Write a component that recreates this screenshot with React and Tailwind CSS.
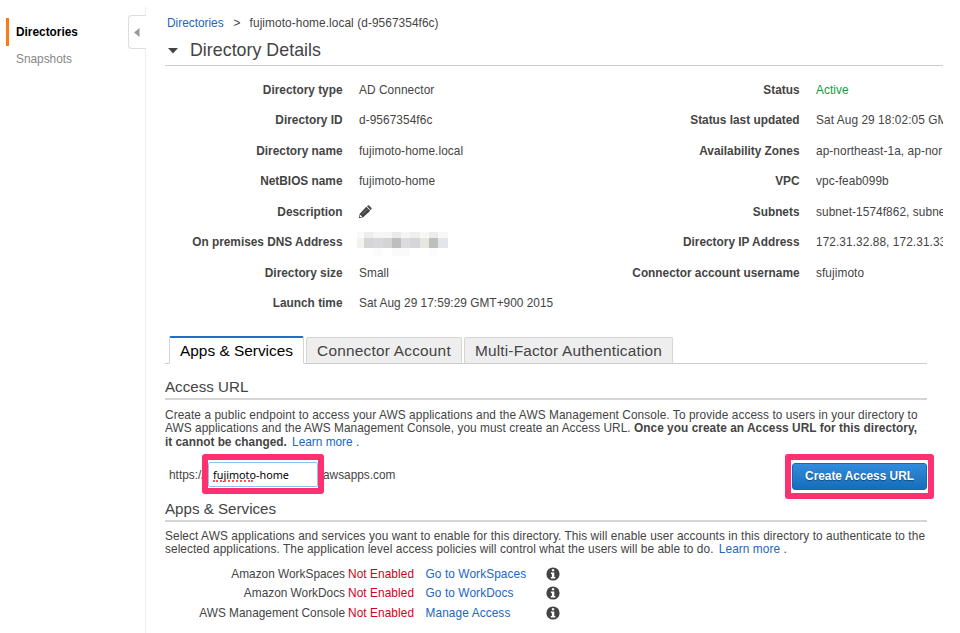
import { useState } from "react";

const details = [
  { label: "Directory type", value: "AD Connector" },
  { label: "Directory ID", value: "d-9567354f6c" },
  { label: "Directory name", value: "fujimoto-home.local" },
  { label: "NetBIOS name", value: "fujimoto-home" },
  { label: "Description", value: <PencilIcon /> },
  { label: "On premises DNS Address", value: <MaskedValue /> },
  { label: "Directory size", value: "Small" },
  {
    label: "Launch time",
    value: <span className="tracking-[0.03px]">Sat Aug 29 17:59:29 GMT+900 2015</span>,
  },
];

const statusDetails = [
  { label: "Status", value: <span className="text-[#179a3c]">Active</span> },
  { label: "Status last updated", value: "Sat Aug 29 18:02:05 GM" },
  { label: "Availability Zones", value: "ap-northeast-1a, ap-nor" },
  { label: "VPC", value: "vpc-feab099b" },
  { label: "Subnets", value: "subnet-1574f862, subne" },
  { label: "Directory IP Address", value: "172.31.32.88, 172.31.33" },
  { label: "Connector account username", value: "sfujimoto" },
];

const services = [
  { name: "Amazon WorkSpaces", action: "Go to WorkSpaces" },
  { name: "Amazon WorkDocs", action: "Go to WorkDocs" },
  { name: "AWS Management Console", action: "Manage Access" },
];

const tabs = [
  { name: "Apps & Services", width: "w-[135px]" },
  { name: "Connector Account", width: "w-[156px] tracking-[0.22px]" },
  { name: "Multi-Factor Authentication", width: "w-[209px] tracking-[0.18px]" },
];

function PencilIcon() {
  return (
    <svg width="14" height="14" viewBox="0 0 14 14" className="-ml-px">
      <path d="M.8 13.200l1-4.400L8.300 1.800l4 4L5.200 12.200z" fill="#444" />
      <path d="M9 1.300l.9-.8q.6-.5 1.200 0l2.400 2.400q.5.600 0 1.200l-.9.900z" fill="#444" />
      <path d="M2.300 9.800l2 2-1.700.5-.8-.8z" fill="#fff" />
      <path d="M4.300 9.200l5-5" stroke="#999" strokeWidth=".7" />
    </svg>
  );
}

function MaskedValue() {
  return (
    <div className="-ml-[2px] w-[91px] pt-[4px]">
      <div className="flex h-[6px]">
        <i className="w-[7px] bg-[#fafafa]" />
        <i className="w-[9px] bg-[#eeeeed]" />
        <i className="w-[19px] bg-[#f5f5f5]" />
        <i className="w-[9px] bg-[#eaeaea]" />
        <i className="w-[9px] bg-[#f5f5f5]" />
        <i className="w-[10px] bg-[#efeff0]" />
        <i className="w-[9px] bg-[#f7f7f5]" />
        <i className="w-[9px] bg-[#ececec]" />
        <i className="w-[10px] bg-[#f8f8f9]" />
      </div>
      <div className="flex h-[10px]">
        <i className="w-[7px] bg-[#f2f2f0]" />
        <i className="w-[9px] bg-[#d5d5d5]" />
        <i className="w-[10px] bg-[#d8d8da]" />
        <i className="w-[9px] bg-[#d4d4d4]" />
        <i className="w-[9px] bg-[#bebebe]" />
        <i className="w-[9px] bg-[#dcdcde]" />
        <i className="w-[10px] bg-[#d6d6d9]" />
        <i className="w-[9px] bg-[#e6e7e0]" />
        <i className="w-[9px] bg-[#bebebe]" />
        <i className="w-[10px] bg-[#e3e5e8]" />
      </div>
      <div className="flex h-[8px]">
        <i className="ml-[16px] w-[9px] bg-[#fbfbfb]" />
        <i className="ml-[10px] w-[18px] bg-[#fafafa]" />
        <i className="ml-[19px] w-[9px] bg-[#fcfcfc]" />
      </div>
    </div>
  );
}

function InfoIcon() {
  return (
    <svg width="14" height="14" viewBox="0 0 14 14">
      <circle cx="7" cy="7" r="6.600" fill="#444" />
      <path d="M5.900 2.300h2.300v2H5.900zM4.900 5.500h3.400v4.600h1v1.400H4.800v-1.400h1.100V6.900h-1z" fill="#fff" />
    </svg>
  );
}

function DetailRow({ label, value, labelWidth }) {
  return (
    <div className="flex h-[30.5px] items-center whitespace-nowrap">
      <div className={`${labelWidth} shrink-0 text-right font-bold`}>{label}</div>
      <div className="ml-[16.5px] tracking-[0.08px]">{value}</div>
    </div>
  );
}

function SectionTitle({ children }) {
  return (
    <h3 className="h-[24px] w-[762px] border-b-2 border-[#d5d5d5] text-[15.15px] leading-[22px] text-[#444]">
      {children}
    </h3>
  );
}

function App() {
  const [activeTab, setActiveTab] = useState("Apps & Services");
  const [url, setUrl] = useState("fujimoto-home");

  return (
    <div className="flex h-[633px] w-[960px] overflow-hidden bg-white font-['Liberation_Sans',Arial,sans-serif] text-[11.85px] leading-[14px] text-[#444]">
      {/* side menu */}
      <nav className="flex w-[128px] shrink-0 flex-col pt-[18px] pl-[6px]">
        <a className="flex h-[28px] items-center border-l-[3px] border-[#ff7a0e] pl-[7px] font-bold text-black">
          Directories
        </a>
        <a className="mt-[6px] pl-[10px] text-[#888]">Snapshots</a>
      </nav>
      <div className="mt-[7px] flex w-[18px] shrink-0 flex-col">
        <div className="h-[8px] border-r border-[#eee]" />
        <button className="flex h-[34px] items-center rounded-l-[4px] border border-r-0 border-[#ddd] pl-[5px]">
          <svg width="6" height="9" viewBox="0 0 6 9">
            <path d="M0 4.500L5.500 0v9z" fill="#999" />
          </svg>
        </button>
        <div className="flex-1 border-r border-[#eee]" />
      </div>

      <main className="ml-[19px] w-[778px] overflow-hidden pt-[16px]">
        <div className="flex pl-[2px] tracking-[0.08px]">
          <a className="tracking-normal text-[#2166c2]">Directories</a>
          <span className="ml-[10px]">&gt;</span>
          <span className="ml-[9px]">fujimoto-home.local (d-9567354f6c)</span>
        </div>
        <h2 className="mt-[6px] flex h-[30px] items-center border-b border-[#ccc] pb-px text-[17.8px] leading-[22px]">
          <svg width="10" height="6" viewBox="0 0 10 6" className="mt-[2px] ml-[3px]">
            <path d="M0 0h10L5 5.500z" fill="#444" />
          </svg>
          <span className="ml-[12px] tracking-[0.03px]">Directory Details</span>
        </h2>

        <div className="mt-[8.5px] flex h-[244px]">
          <div className="w-[450px] shrink-0">
            {details.map((item) => (
              <DetailRow key={item.label} {...item} labelWidth="w-[177.5px]" />
            ))}
          </div>
          <div>
            {statusDetails.map((item) => (
              <DetailRow key={item.label} {...item} labelWidth="w-[184.5px]" />
            ))}
          </div>
        </div>

        {/* tabs */}
        <div className="mt-[17.5px] flex h-[28px] w-[762px] items-end gap-[2px] border-b border-[#ccc] pl-[4px] text-[15.4px]">
          {tabs.map((tab) => (
            <button
              key={tab.name}
              onClick={() => setActiveTab(tab.name)}
              className={`${tab.width} shrink-0 whitespace-nowrap rounded-t-[2px] border border-[#d5d5d5] ${
                activeTab === tab.name
                  ? "-mb-px h-[28px] border-t-2 border-t-[#1f6fc9] border-b-white bg-white text-black"
                  : "h-[26px] border-b-0 bg-[#eee]"
              }`}
            >
              {tab.name}
            </button>
          ))}
        </div>

        <div className="mt-[12px]">
          <SectionTitle>Access URL</SectionTitle>
        </div>
        <div className="mt-[8.5px] leading-[13.6px] whitespace-nowrap">
          <p className="tracking-[0.082px]">
            Create a public endpoint to access your AWS applications and the AWS Management Console. To provide access to users in your directory to
          </p>
          <p className="tracking-[0.047px]">
            AWS applications and the AWS Management Console, you must create an Access URL. <b>Once you create an Access URL for this directory,</b>
          </p>
          <p>
            <b>it cannot be changed.</b> <a className="ml-[2px] text-[#2166c2]">Learn more</a> .
          </p>
        </div>

        <div className="mt-[3.5px] flex h-[45px]">
          <span className="mt-[15px] w-[37px] overflow-hidden pl-[4px]">https://</span>
          <div className="relative mt-[1px] h-[40px] w-[122px] shrink-0 rounded-[3px] border-[6px] border-[#ff3070] bg-white">
            <input
              value={url}
              onChange={(e) => setUrl(e.target.value)}
              className="mt-[2px] h-[25px] w-full rounded-[2px] border border-[#8cc6ee] pl-[4px] font-['Noto_Sans'] text-[10.8px] text-black outline-none"
            />
            {/* spelling mark */}
            <div className="absolute top-[20px] left-[5px] w-[40px] border-b-2 border-dotted border-[#f55]" />
          </div>
          <span className="mt-[15px] -ml-px">awsapps.com</span>
          <div className="mt-px ml-auto mr-[9px] h-[45px] w-[149px] shrink-0 rounded-[3px] border-[6px] border-[#ff3070] bg-white p-px">
            <button className="mt-[2px] h-[27px] w-full rounded-[3px] border border-[#1567b5] bg-linear-to-b from-[#328bdc] to-[#146eba] font-bold whitespace-nowrap text-white [text-shadow:0_1px_1px_#00000066]">
              Create Access URL
            </button>
          </div>
        </div>

        <SectionTitle>Apps &amp; Services</SectionTitle>
        <div className="mt-[8px] leading-[13.6px] whitespace-nowrap">
          <p className="tracking-[0.08px]">
            Select AWS applications and services you want to enable for this directory. This will enable user accounts in this directory to authenticate to the
          </p>
          <p className="tracking-[0.07px]">
            selected applications. The application level access policies will control what the users will be able to do. <a className="ml-[2px] text-[#2166c2]">Learn more</a> .
          </p>
        </div>

        <div className="mt-[7px]">
          {services.map((service) => (
            <div key={service.name} className="flex h-[19.5px] items-center whitespace-nowrap">
              <span className="w-[180px] text-right">{service.name}</span>
              <span className="ml-[3px] w-[77.5px] tracking-[0.08px] text-[#d0021b]">Not Enabled</span>
              <a className="w-[120px] tracking-[0.1px] text-[#2166c2]">{service.action}</a>
              <InfoIcon />
            </div>
          ))}
        </div>
      </main>
    </div>
  );
}

export default App;
